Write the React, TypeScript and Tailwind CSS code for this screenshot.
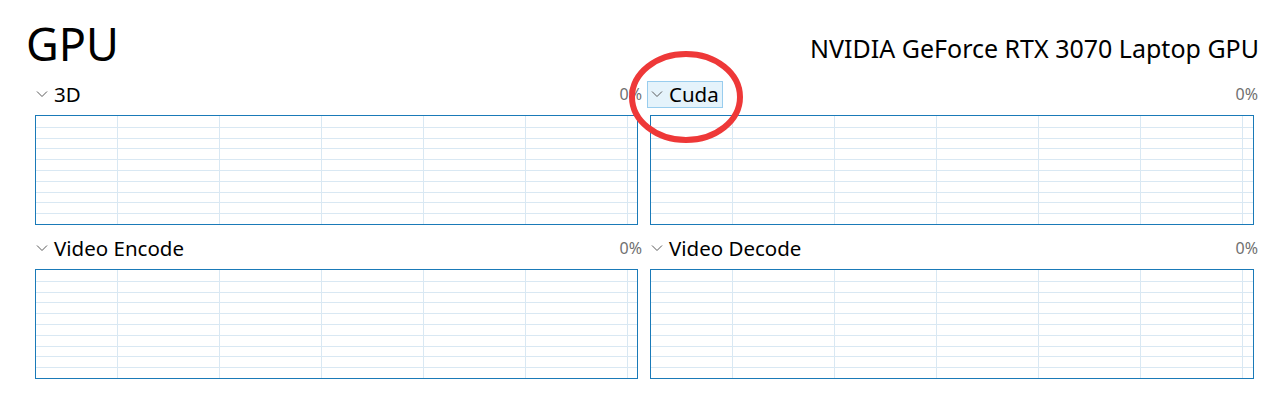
import React from "react";

const engines = [
  { name: "3D", value: "0%" },
  { name: "Cuda", value: "0%", focused: true },
  { name: "Video Encode", value: "0%" },
  { name: "Video Decode", value: "0%" },
];

function Chevron() {
  return (
    <svg width="12" height="8" viewBox="0 0 12 8" className="shrink-0">
      <path d="M1 1.5 L6 6.5 L11 1.5" fill="none" stroke="#5a5a5a" strokeWidth="1" />
    </svg>
  );
}

// gridlines of the usage graph
function Graph() {
  const rows = Array.from({ length: 9 }, (_, i) => Math.round((i + 1) * 10.8) + 0.5);
  const cols = [81, 183, 285, 387, 489, 591].map((x) => x + 0.5);
  return (
    <div className="h-[110px] border border-[#1a7ab8] bg-white">
      <svg width="100%" height="100%" className="block">
        {rows.map((y) => (
          <line key={"r" + y} x1="0" x2="100%" y1={y} y2={y} stroke="#d9e8f3" strokeWidth="1" />
        ))}
        {cols.map((x) => (
          <line key={"c" + x} x1={x} x2={x} y1="0" y2="100%" stroke="#d9e8f3" strokeWidth="1" />
        ))}
      </svg>
    </div>
  );
}

export default function App() {
  return (
    <div className="relative w-[1285px] h-[395px] bg-white overflow-hidden font-['Noto_Sans','Open_Sans',sans-serif] text-black">
      <div className="flex items-end justify-between pl-[26px] pr-[26px] h-[81px]">
        <h1 className="text-[45px] leading-none pb-[15px] font-normal">GPU</h1>
        <div className="text-[25px] leading-none pb-[20px]">NVIDIA GeForce RTX 3070 Laptop GPU</div>
      </div>

      <div className="grid grid-cols-[603px_604px] gap-x-[12px] gap-y-[10px] pl-[35px]">
        {engines.map((e) => (
          <div key={e.name}>
            <div className="flex items-center justify-between h-[26px] mb-[8px]">
              <div
                className={
                  "flex items-center gap-[6px] h-[27px] -ml-[3px] pl-[3px] pr-[3px] border " +
                  (e.focused ? "bg-[#e5f3fb] border-[#99cdee]" : "border-transparent")
                }
              >
                <Chevron />
                <span className="text-[20.5px] leading-none">{e.name}</span>
              </div>
              <span className="text-[16px] leading-none text-[#707070] -mr-[4px]">{e.value}</span>
            </div>
            <Graph />
          </div>
        ))}
      </div>

      {/* red annotation ring */}
      <svg className="absolute left-[626px] top-[49px]" width="120" height="96" viewBox="0 0 120 96">
        <ellipse cx="60" cy="48" rx="54" ry="43" fill="none" stroke="#ee3838" strokeWidth="6" />
      </svg>
    </div>
  );
}
